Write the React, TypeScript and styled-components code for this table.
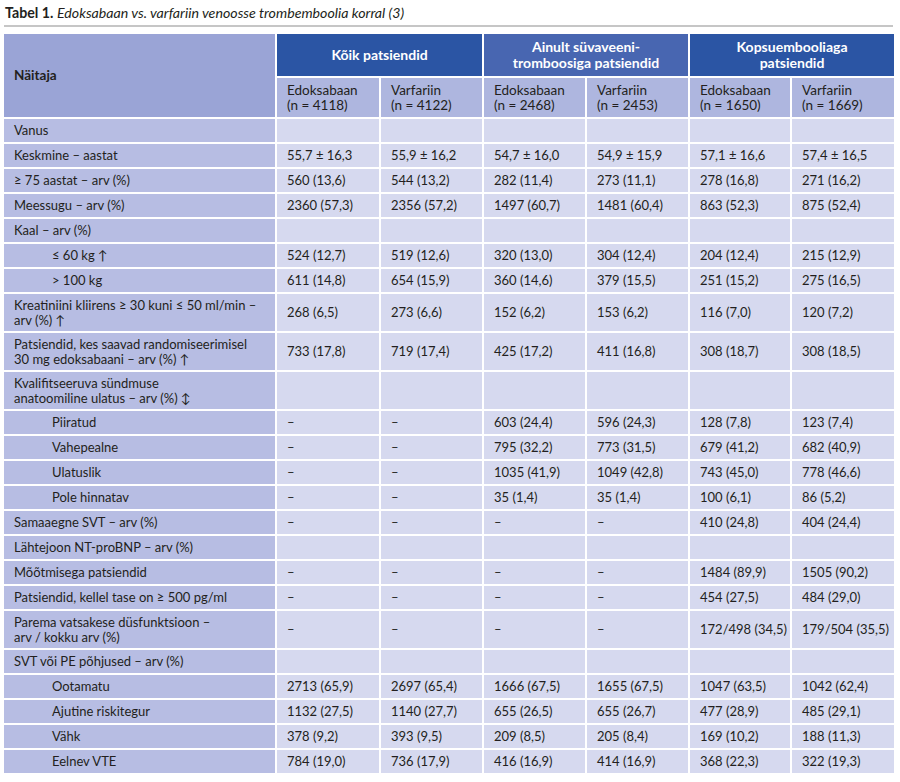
import React from 'react';
import styled, { createGlobalStyle } from 'styled-components';

const GlobalStyle = createGlobalStyle`
  html, body {
    margin: 0;
    padding: 0;
    background: #ffffff;
  }
  body {
    font-family: Lato, 'Open Sans', sans-serif;
    color: #231f20;
  }
`;

const Page = styled.div`
  width: 900px;
  padding: 5px 0 0 4px;
  box-sizing: border-box;
`;

const Caption = styled.div`
  font-size: 14.2px;
  line-height: 16px;
  padding-left: 1px;
  color: #231f20;

  b {
    font-weight: 700;
  }

  i {
    font-style: italic;
  }
`;

const Rule = styled.div`
  width: 889px;
  height: 2px;
  margin-top: 4px;
  background: #c6c6c6;
`;

const Table = styled.table`
  width: 894px;
  border-collapse: separate;
  border-spacing: 2px;
  table-layout: fixed;
  margin: 5px 0 0 -2px;
  font-size: 13px;
  line-height: 15px;
`;

const GroupCell = styled.th<{ $light?: boolean }>`
  height: 40px;
  padding: 1px 6px;
  background: ${(p) => (p.$light ? '#4866b1' : '#2b55a4')};
  color: #ffffff;
  font-weight: 700;
  font-size: 14px;
  line-height: 16px;
  text-align: center;
  vertical-align: middle;
`;

const CornerCell = styled.th`
  background: #9aa4d6;
  padding: 0 10px;
  text-align: left;
  font-weight: 700;
  font-size: 13.5px;
  vertical-align: middle;
`;

const SubCell = styled.th`
  height: 39px;
  padding: 0 10px;
  background: #aeb6df;
  font-weight: 400;
  font-size: 13.5px;
  text-align: left;
  vertical-align: middle;
`;

const LabelCell = styled.td<{ $indent?: boolean; $tall?: boolean }>`
  height: ${(p) => (p.$tall ? '37px' : '23px')};
  padding: 0 0 0 ${(p) => (p.$indent ? '48px' : '10px')};
  background: #b7bde3;
  vertical-align: middle;
  white-space: nowrap;
`;

const DataCell = styled.td`
  padding: 0 10px;
  background: #d6d9ef;
  vertical-align: middle;
  white-space: nowrap;
`;

type Row = {
  label: React.ReactNode;
  values?: string[];
  indent?: boolean;
  tall?: boolean;
};

const D = '–';

const rows: Row[] = [
  { label: 'Vanus' },
  { label: 'Keskmine – aastat', values: ['55,7 ± 16,3', '55,9 ± 16,2', '54,7 ± 16,0', '54,9 ± 15,9', '57,1 ± 16,6', '57,4 ± 16,5'] },
  { label: '≥ 75 aastat – arv (%)', values: ['560 (13,6)', '544 (13,2)', '282 (11,4)', '273 (11,1)', '278 (16,8)', '271 (16,2)'] },
  { label: 'Meessugu – arv (%)', values: ['2360 (57,3)', '2356 (57,2)', '1497 (60,7)', '1481 (60,4)', '863 (52,3)', '875 (52,4)'] },
  { label: 'Kaal – arv (%)' },
  { label: '≤ 60 kg ↑', indent: true, values: ['524 (12,7)', '519 (12,6)', '320 (13,0)', '304 (12,4)', '204 (12,4)', '215 (12,9)'] },
  { label: '> 100 kg', indent: true, values: ['611 (14,8)', '654 (15,9)', '360 (14,6)', '379 (15,5)', '251 (15,2)', '275 (16,5)'] },
  {
    label: (
      <>
        Kreatiniini kliirens ≥ 30 kuni ≤ 50 ml/min –<br />arv (%) ↑
      </>
    ),
    tall: true,
    values: ['268 (6,5)', '273 (6,6)', '152 (6,2)', '153 (6,2)', '116 (7,0)', '120 (7,2)'],
  },
  {
    label: (
      <>
        Patsiendid, kes saavad randomiseerimisel
        <br />
        30 mg edoksabaani – arv (%) ↑
      </>
    ),
    tall: true,
    values: ['733 (17,8)', '719 (17,4)', '425 (17,2)', '411 (16,8)', '308 (18,7)', '308 (18,5)'],
  },
  {
    label: (
      <>
        Kvalifitseeruva sündmuse
        <br />
        anatoomiline ulatus – arv (%) ↕
      </>
    ),
    tall: true,
  },
  { label: 'Piiratud', indent: true, values: [D, D, '603 (24,4)', '596 (24,3)', '128 (7,8)', '123 (7,4)'] },
  { label: 'Vahepealne', indent: true, values: [D, D, '795 (32,2)', '773 (31,5)', '679 (41,2)', '682 (40,9)'] },
  { label: 'Ulatuslik', indent: true, values: [D, D, '1035 (41,9)', '1049 (42,8)', '743 (45,0)', '778 (46,6)'] },
  { label: 'Pole hinnatav', indent: true, values: [D, D, '35 (1,4)', '35 (1,4)', '100 (6,1)', '86 (5,2)'] },
  { label: 'Samaaegne SVT  – arv (%)', values: [D, D, D, D, '410 (24,8)', '404 (24,4)'] },
  { label: 'Lähtejoon NT-proBNP – arv (%)' },
  { label: 'Mõõtmisega patsiendid', values: [D, D, D, D, '1484 (89,9)', '1505 (90,2)'] },
  { label: 'Patsiendid, kellel tase on ≥ 500 pg/ml', values: [D, D, D, D, '454 (27,5)', '484 (29,0)'] },
  {
    label: (
      <>
        Parema vatsakese düsfunktsioon –<br />arv / kokku arv (%)
      </>
    ),
    tall: true,
    values: [D, D, D, D, '172/498 (34,5)', '179/504 (35,5)'],
  },
  { label: 'SVT või PE põhjused – arv (%)' },
  { label: 'Ootamatu', indent: true, values: ['2713 (65,9)', '2697 (65,4)', '1666 (67,5)', '1655 (67,5)', '1047 (63,5)', '1042 (62,4)'] },
  { label: 'Ajutine riskitegur', indent: true, values: ['1132 (27,5)', '1140 (27,7)', '655 (26,5)', '655 (26,7)', '477 (28,9)', '485 (29,1)'] },
  { label: 'Vähk', indent: true, values: ['378 (9,2)', '393 (9,5)', '209 (8,5)', '205 (8,4)', '169 (10,2)', '188 (11,3)'] },
  { label: 'Eelnev VTE', indent: true, values: ['784 (19,0)', '736 (17,9)', '416 (16,9)', '414 (16,9)', '368 (22,3)', '322 (19,3)'] },
];

const arms = [
  ['Edoksabaan', '(n = 4118)'],
  ['Varfariin', '(n = 4122)'],
  ['Edoksabaan', '(n = 2468)'],
  ['Varfariin', '(n = 2453)'],
  ['Edoksabaan', '(n = 1650)'],
  ['Varfariin', '(n = 1669)'],
];

// widths of the seven columns, gaps of 2px between them
const colWidths = [271, 102, 101, 101, 101, 100, 102];

const App: React.FC = () => {
  return (
    <Page>
      <GlobalStyle />
      <Caption>
        <b>Tabel 1.</b> <i>Edoksabaan vs. varfariin venoosse trombemboolia korral (3)</i>
      </Caption>
      <Rule />
      <Table>
        <colgroup>
          {colWidths.map((w, i) => (
            <col key={i} style={{ width: w }} />
          ))}
        </colgroup>
        <thead>
          <tr>
            <CornerCell rowSpan={2}>Näitaja</CornerCell>
            <GroupCell colSpan={2}>Kõik patsiendid</GroupCell>
            <GroupCell colSpan={2} $light>
              Ainult süvaveeni-
              <br />
              tromboosiga patsiendid
            </GroupCell>
            <GroupCell colSpan={2}>
              Kopsuembooliaga
              <br />
              patsiendid
            </GroupCell>
          </tr>
          <tr>
            {arms.map(([name, n], i) => (
              <SubCell key={i}>
                {name}
                <br />
                {n}
              </SubCell>
            ))}
          </tr>
        </thead>
        <tbody>
          {rows.map((row, i) => (
            <tr key={i}>
              <LabelCell $indent={row.indent} $tall={row.tall}>
                {row.label}
              </LabelCell>
              {Array.from({ length: 6 }).map((_, j) => (
                <DataCell key={j}>{row.values ? row.values[j] : ''}</DataCell>
              ))}
            </tr>
          ))}
        </tbody>
      </Table>
    </Page>
  );
};

export default App;
